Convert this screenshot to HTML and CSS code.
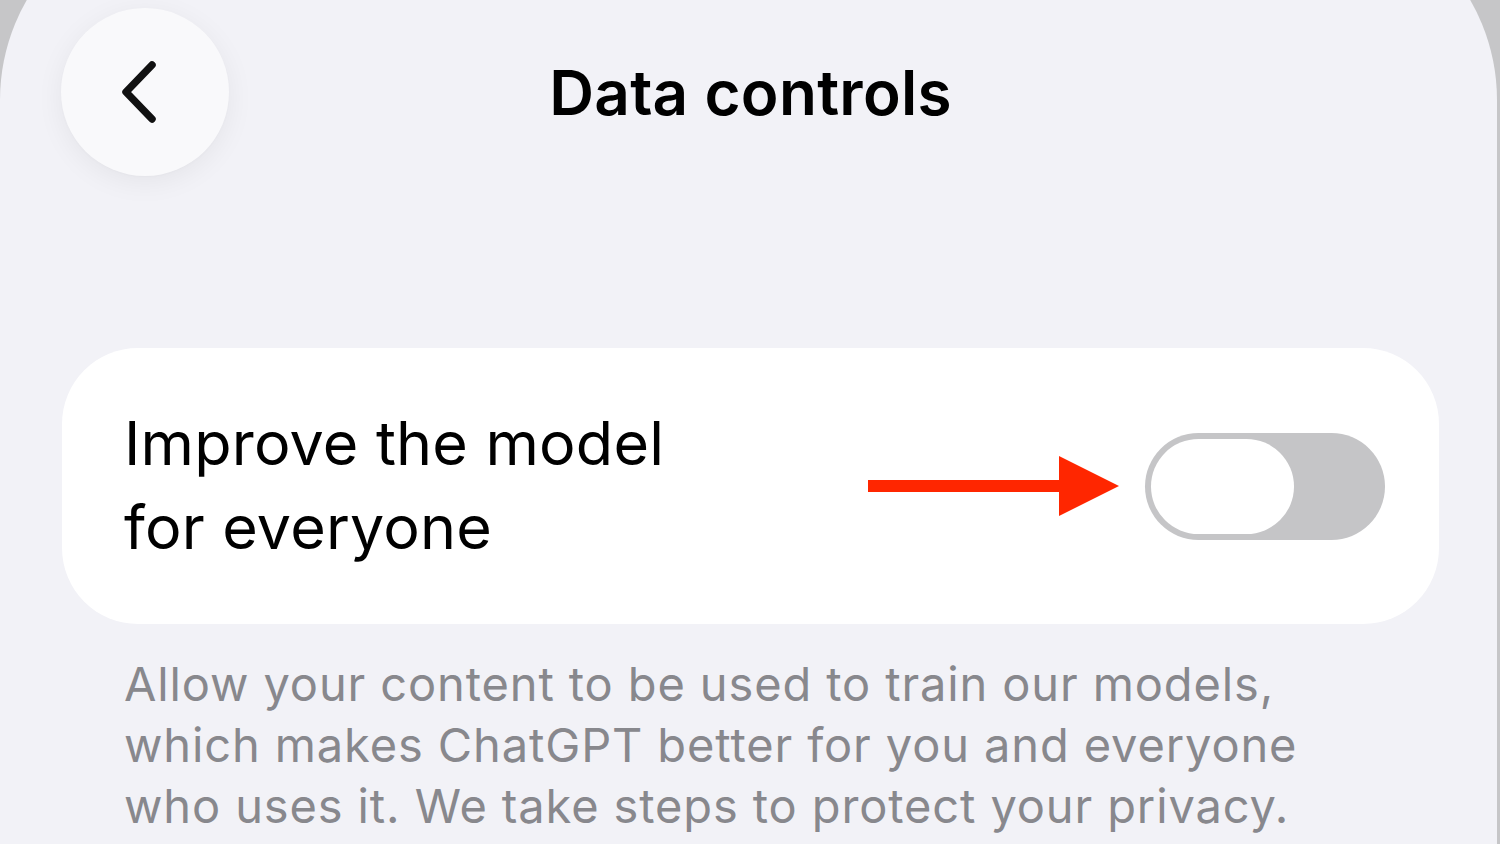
FILE: index.html
```html
<!DOCTYPE html>
<html lang="en">
<head>
<meta charset="utf-8">
<title>Data controls</title>
<link rel="stylesheet" href="styles.css">
</head>
<body>
<div class="screen">
  <header class="nav">
    <div class="nav-left">
      <button class="back" aria-label="Back">
        <svg width="40" height="64" viewBox="0 0 40 64" aria-hidden="true">
          <path d="M32 5 L6 32 L32 59" fill="none" stroke="#111" stroke-width="7.5" stroke-linecap="round" stroke-linejoin="round"/>
        </svg>
      </button>
    </div>
    <h1 class="title">Data controls</h1>
    <div class="nav-right"></div>
  </header>

  <section class="card">
    <div class="card-label">Improve the model<br>for everyone</div>
    <div class="card-controls">
      <svg class="arrow" width="252" height="60" viewBox="0 0 252 60" aria-hidden="true">
        <rect x="0" y="24" width="195" height="12" fill="#ff2600"/>
        <polygon points="191,0 251,30 191,60" fill="#ff2600"/>
      </svg>
      <div class="toggle" role="switch" aria-checked="false">
        <div class="knob"></div>
      </div>
    </div>
  </section>

  <p class="footnote">Allow your content to be used to train our models, which makes ChatGPT better for you and everyone who uses it. We take steps to protect your privacy.</p>
</div>
</body>
</html>
```

FILE: styles.css
```css
* { box-sizing: border-box; }

html, body {
  margin: 0;
  padding: 0;
  width: 1500px;
  height: 844px;
  overflow: hidden;
  background: #c6c6c8;
  font-family: "Inter", "Noto Sans", "Liberation Sans", sans-serif;
}

.screen {
  width: 1497px;
  height: 944px;
  margin-top: -100px;
  padding-top: 108px;
  background: #f2f2f7;
  border-radius: 200px 200px 0 0;
  overflow: hidden;
}

.nav {
  display: grid;
  grid-template-columns: 1fr auto 1fr;
  align-items: center;
  height: 168px;
}

.nav-left {
  padding-left: 61px;
  display: flex;
}

.back {
  width: 168px;
  height: 168px;
  border-radius: 50%;
  border: none;
  background: #f9f9fb;
  box-shadow: 0 6px 28px rgba(0, 0, 0, 0.06), 0 1px 3px rgba(0, 0, 0, 0.02);
  display: flex;
  align-items: center;
  justify-content: center;
  padding: 0 10px 0 0;
}

.title {
  margin: 0;
  font-size: 62px;
  font-weight: 600;
  letter-spacing: 0.3px;
  color: #000;
  padding-left: 4px;
}

.card {
  margin: 172px 58px 0 62px;
  height: 276px;
  background: #fff;
  border-radius: 76px;
  display: flex;
  align-items: center;
  justify-content: space-between;
  padding: 0 54px 0 62px;
}

.card-label {
  font-size: 61px;
  line-height: 84px;
  color: #000;
  padding-top: 0;
  padding-bottom: 2px;
  letter-spacing: 0.2px;
}

.card-controls {
  display: flex;
  align-items: center;
  gap: 25px;
}

.arrow {
  display: block;
}

.toggle {
  width: 240px;
  height: 107px;
  border-radius: 54px;
  background: #c5c5c7;
  padding: 6px;
  display: flex;
}

.knob {
  width: 143px;
  height: 95px;
  border-radius: 48px;
  background: #fff;
}

.footnote {
  margin: 29px 140px 0 124px;
  font-size: 47px;
  line-height: 61px;
  color: #88888d;
  letter-spacing: 0.88px;
}
```
